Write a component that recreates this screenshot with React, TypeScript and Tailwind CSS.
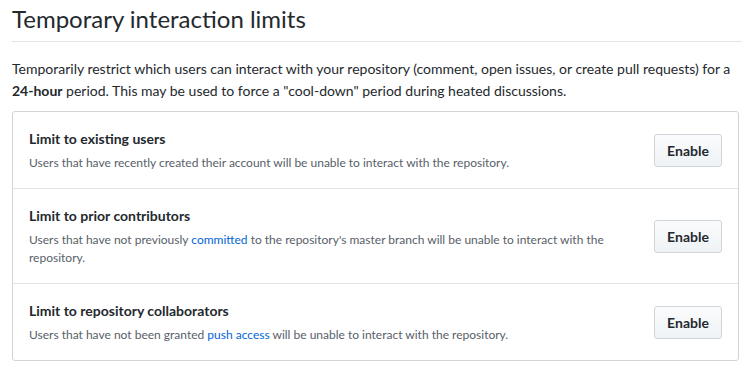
import React from "react";

const font = { fontFamily: 'Lato, "Noto Sans", sans-serif' };

type Limit = { title: string; desc: React.ReactNode };

const limits: Limit[] = [
  {
    title: "Limit to existing users",
    desc: "Users that have recently created their account will be unable to interact with the repository.",
  },
  {
    title: "Limit to prior contributors",
    desc: (
      <>
        Users that have not previously <a className="text-[#0366d6]">committed</a> to the repository's master branch
        will be unable to interact with the repository.
      </>
    ),
  },
  {
    title: "Limit to repository collaborators",
    desc: (
      <>
        Users that have not been granted <a className="text-[#0366d6]">push access</a> will be unable to interact with
        the repository.
      </>
    ),
  },
];

export default function App() {
  return (
    <div className="w-[754px] h-[381px] bg-white px-3 text-[#24292e]" style={font}>
      {/* Header */}
      <div className="pt-[3px] pb-[6px] border-b border-[#e1e4e8]">
        <h2 className="text-[24px] font-normal leading-[32px]">Temporary interaction limits</h2>
      </div>

      <p className="mt-[16px] text-[14px] leading-[22px] w-[728px]">
        Temporarily restrict which users can interact with your repository (comment, open issues, or create pull
        requests) for a <strong className="font-bold">24-hour</strong> period. This may be used to force a
        "cool-down" period during heated discussions.
      </p>

      {/* Options */}
      <div className="mt-[9px] w-[727px] border border-[#d1d5da] rounded-[3px]">
        {limits.map((l, i) => (
          <div
            key={l.title}
            className={`flex items-center justify-between px-[16px] py-[16px] ${
              i > 0 ? "border-t border-[#e1e4e8]" : ""
            }`}
          >
            <div className="w-[600px]">
              <div className="text-[14px] font-bold leading-[21px]">{l.title}</div>
              <p className="mt-[5px] text-[12px] leading-[18px] text-[#586069]">{l.desc}</p>
            </div>
            <button className="h-[33px] w-[68px] rounded-[3px] border border-[#d1d5da] bg-gradient-to-b from-[#fafbfc] to-[#eff3f6] text-[14px] font-bold text-[#24292e]">
              Enable
            </button>
          </div>
        ))}
      </div>
    </div>
  );
}
